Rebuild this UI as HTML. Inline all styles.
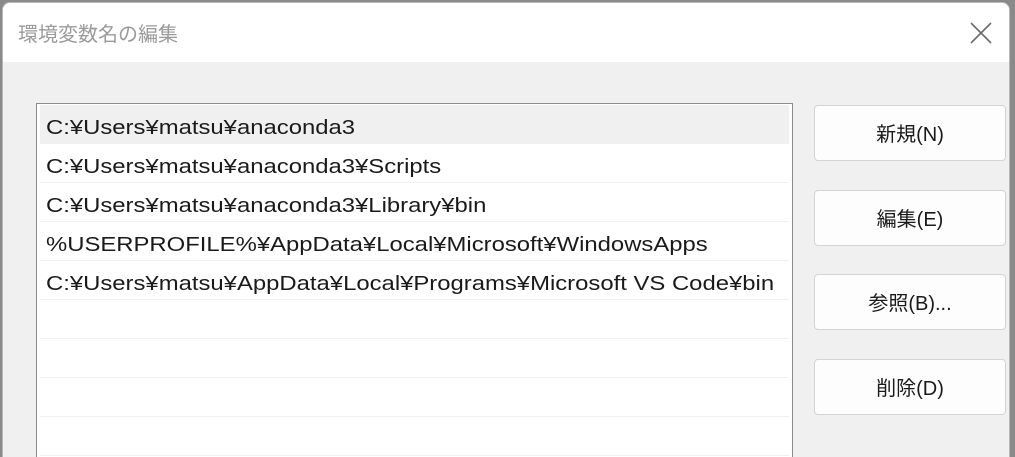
<!DOCTYPE html>
<html><head><meta charset="utf-8"><style>
html,body{margin:0;padding:0;width:1015px;height:457px;overflow:hidden;}
body{background:#8a8a8a;position:relative;font-family:"Liberation Sans","Noto Sans CJK JP",sans-serif;}
.win{position:absolute;left:2px;top:2px;width:1008px;height:460px;background:#f0f0f0;border-radius:8px 8px 0 0;overflow:hidden;border:1px solid #b8b8b8;box-sizing:border-box;}
.title{position:absolute;left:0;top:0;right:0;height:59px;background:#fff;}
.title span{position:absolute;left:15px;top:15px;font-size:20px;color:#9a9a9a;}
.x{position:absolute;left:966px;top:18px;}
.list{position:absolute;left:33px;top:100px;width:755px;height:400px;background:#fff;border:1px solid #8c8c8c;}
.row{position:absolute;left:3px;right:3px;height:38px;border-bottom:1px solid #f0f0f0;color:#1a1a1a;}
.row span{position:absolute;left:6px;top:11px;font-size:20px;line-height:24px;white-space:nowrap;transform:scaleX(1.193);transform-origin:0 0;}
.sel{background:#f0f0f0;}
.btn{position:absolute;left:811px;width:192px;height:56px;background:#fdfdfd;border:1px solid #d3d3d3;border-radius:4px;text-align:center;line-height:58px;font-size:20px;color:#1a1a1a;box-sizing:border-box;}
</style></head><body>
<div class="win">
<div class="title"><span>環境変数名の編集</span>
<svg class="x" width="24" height="24" viewBox="0 0 24 24"><path d="M2 2L22 22M22 2L2 22" stroke="#6a6a6a" stroke-width="1.6" fill="none"/></svg></div>
<div class="list">
<div class="row sel" style="top:1px"><span>C:¥Users¥matsu¥anaconda3</span></div>
<div class="row" style="top:40px"><span>C:¥Users¥matsu¥anaconda3¥Scripts</span></div>
<div class="row" style="top:79px"><span>C:¥Users¥matsu¥anaconda3¥Library¥bin</span></div>
<div class="row" style="top:118px"><span>%USERPROFILE%¥AppData¥Local¥Microsoft¥WindowsApps</span></div>
<div class="row" style="top:157px"><span>C:¥Users¥matsu¥AppData¥Local¥Programs¥Microsoft VS Code¥bin</span></div>
<div class="row" style="top:196px"></div>
<div class="row" style="top:235px"></div>
<div class="row" style="top:274px"></div>
<div class="row" style="top:313px"></div>
</div>
<div class="btn" style="top:102px">新規(N)</div>
<div class="btn" style="top:187px">編集(E)</div>
<div class="btn" style="top:271px">参照(B)...</div>
<div class="btn" style="top:356px">削除(D)</div>
</div>
</body></html>
